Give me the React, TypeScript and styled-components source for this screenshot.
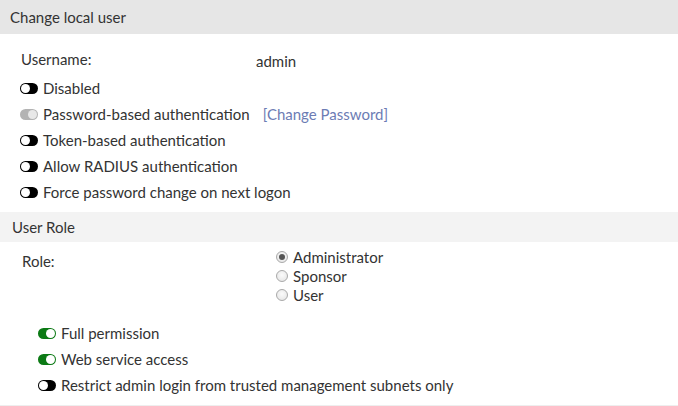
import React from "react";
import styled, { createGlobalStyle } from "styled-components";

const Global = createGlobalStyle`
  html, body { margin: 0; padding: 0; background: #fff; }
  body { font-family: Lato, "Open Sans", sans-serif; color: #333; }
`;

const Page = styled.div`
  width: 678px;
  height: 406px;
  overflow: hidden;
  display: flex;
  flex-direction: column;
  border-bottom: 1px solid #eeeeee;
  box-sizing: border-box;
`;

const TitleBar = styled.div`
  height: 34px;
  background: #e6e6e6;
  display: flex;
  align-items: center;
  padding-left: 10px;
  font-size: 15px;
  color: #333;
`;

const SectionBar = styled.div`
  height: 30px;
  background: #f3f3f3;
  display: flex;
  align-items: center;
  padding-left: 12px;
  font-size: 15px;
  color: #333;
  margin-top: 7px;
`;

const Body = styled.div<{ $top: number; $left: number }>`
  display: flex;
  flex-direction: column;
  padding: ${(p) => p.$top}px 0 0 ${(p) => p.$left}px;
`;

const FieldRow = styled.div<{ $h: number; $col: number }>`
  display: grid;
  grid-template-columns: ${(p) => p.$col}px 1fr;
  height: ${(p) => p.$h}px;
  font-size: 15px;
  align-items: start;
`;

const Label = styled.span<{ $dy: number }>`
  padding-top: ${(p) => p.$dy}px;
  padding-left: 1px;
`;

const Value = styled.span<{ $dy: number }>`
  padding-top: ${(p) => p.$dy}px;
`;

const ToggleRow = styled.div`
  height: 26px;
  display: flex;
  align-items: center;
  gap: 5px;
  font-size: 15px;
  color: #333;
`;

const Track = styled.span<{ $on?: boolean; $disabled?: boolean }>`
  position: relative;
  width: 18px;
  height: 11px;
  box-sizing: border-box;
  border-radius: 6px;
  background: ${(p) => (p.$disabled ? "#b3b3b3" : p.$on ? "#0c7a15" : "#000")};
  flex: none;
`;

const Knob = styled.span<{ $on?: boolean; $disabled?: boolean }>`
  position: absolute;
  top: 1px;
  ${(p) => (p.$on || p.$disabled ? "right: 1px;" : "left: 1px;")}
  width: 9px;
  height: 9px;
  border-radius: 50%;
  background: ${(p) => (p.$disabled ? "#e8e8e8" : "#fff")};
`;

const Link = styled.span`
  color: #6c7cb4;
  margin-left: 8px;
`;

const RadioGroup = styled.div`
  display: flex;
  flex-direction: column;
  padding-top: 1px;
`;

const RadioRow = styled.div`
  height: 19px;
  display: flex;
  align-items: center;
  gap: 5px;
  font-size: 15px;
  margin-left: 20px;
`;

const RadioCircle = styled.span<{ $checked?: boolean }>`
  width: 12px;
  height: 12px;
  box-sizing: border-box;
  border-radius: 50%;
  border: 1px solid #a9a9a9;
  background: radial-gradient(circle at 50% 40%, #fbfbfb, #e2e2e2);
  display: flex;
  align-items: center;
  justify-content: center;
  flex: none;
  &::after {
    content: "";
    display: ${(p) => (p.$checked ? "block" : "none")};
    width: 6px;
    height: 6px;
    border-radius: 50%;
    background: #555;
  }
`;

const Toggle = ({ on, disabled }: { on?: boolean; disabled?: boolean }) => (
  <Track $on={on} $disabled={disabled}>
    <Knob $on={on} $disabled={disabled} />
  </Track>
);

const Radio = ({ label, checked }: { label: string; checked?: boolean }) => (
  <RadioRow>
    <RadioCircle $checked={checked} />
    {label}
  </RadioRow>
);

export default function App() {
  return (
    <>
      <Global />
      <Page>
        <TitleBar>Change local user</TitleBar>
        <Body $top={16} $left={20}>
          <FieldRow $h={25} $col={236}>
            <Label $dy={0}>Username:</Label>
            <Value $dy={2}>admin</Value>
          </FieldRow>
          <ToggleRow>
            <Toggle />
            Disabled
          </ToggleRow>
          <ToggleRow>
            <Toggle disabled />
            Password-based authentication
            <Link>[Change Password]</Link>
          </ToggleRow>
          <ToggleRow>
            <Toggle />
            Token-based authentication
          </ToggleRow>
          <ToggleRow>
            <Toggle />
            Allow RADIUS authentication
          </ToggleRow>
          <ToggleRow>
            <Toggle />
            Force password change on next logon
          </ToggleRow>
        </Body>
        <SectionBar>User Role</SectionBar>
        <Body $top={4} $left={21}>
          <FieldRow $h={74} $col={235}>
            <Label $dy={6}>Role:</Label>
            <RadioGroup>
              <Radio label="Administrator" checked />
              <Radio label="Sponsor" />
              <Radio label="User" />
            </RadioGroup>
          </FieldRow>
        </Body>
        <Body $top={0} $left={38}>
          <ToggleRow>
            <Toggle on />
            Full permission
          </ToggleRow>
          <ToggleRow>
            <Toggle on />
            Web service access
          </ToggleRow>
          <ToggleRow>
            <Toggle />
            Restrict admin login from trusted management subnets only
          </ToggleRow>
        </Body>
      </Page>
    </>
  );
}
